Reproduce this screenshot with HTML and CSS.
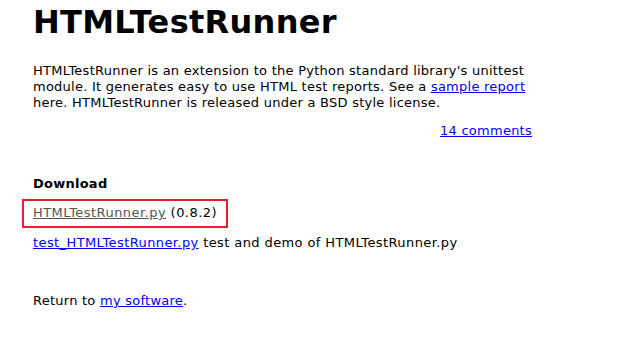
FILE: index.html
```html
<!DOCTYPE html>
<html lang="en">
<head>
  <meta charset="UTF-8">
  <title>HTMLTestRunner</title>
  <link rel="stylesheet" href="styles.css">
</head>
<body>

  <div class="contenido">
    <h1>HTMLTestRunner</h1>

    <p class="intro">
      HTMLTestRunner is an extension to the Python standard library's unittest
      module. It generates easy to use HTML test reports. See a <a href="#">sample report</a>
      here. HTMLTestRunner is released under a BSD style license.
    </p>

    <p class="comentarios"><a href="#">14 comments</a></p>

    <h3>Download</h3>

    <p class="descarga"><span class="marcado"><a href="#" class="visitado">HTMLTestRunner.py</a> (0.8.2)</span></p>

    <p class="descarga segunda"><a href="#">test_HTMLTestRunner.py</a> test and demo of HTMLTestRunner.py</p>

    <p class="volver">Return to <a href="#">my software</a>.</p>
  </div>

</body>
</html>
```

FILE: styles.css
```css
body {
  margin: 0;
  background-color: #fff;
  color: #000;
  font-family: "DejaVu Sans", Verdana, sans-serif;
  font-size: 13px;
  line-height: 16px;
  letter-spacing: 0.25px;
}

.contenido {
  width: 510px;
  padding: 0 0 0 33px;
}

h1 {
  font-size: 32px;
  line-height: 38px;
  letter-spacing: 0.3px;
  margin: 3px 0 22px;
}

a {
  color: #00f;
}

.intro {
  margin: 0;
}

.comentarios {
  text-align: right;
  margin: 12px 0 0;
  padding-right: 11px;
}

h3 {
  font-size: 13px;
  margin: 37px 0 0;
}

.descarga {
  margin: 13px 0 0;
}

.segunda {
  margin-top: 14px;
  letter-spacing: 0.4px;
}

.marcado {
  border: 2px solid #e8202a;
  padding: 4px 9px 6px 9px;
  margin-left: -11px;
  letter-spacing: 0.45px;
}

.visitado {
  color: #555;
}

.volver {
  margin: 42px 0 0;
}
```
